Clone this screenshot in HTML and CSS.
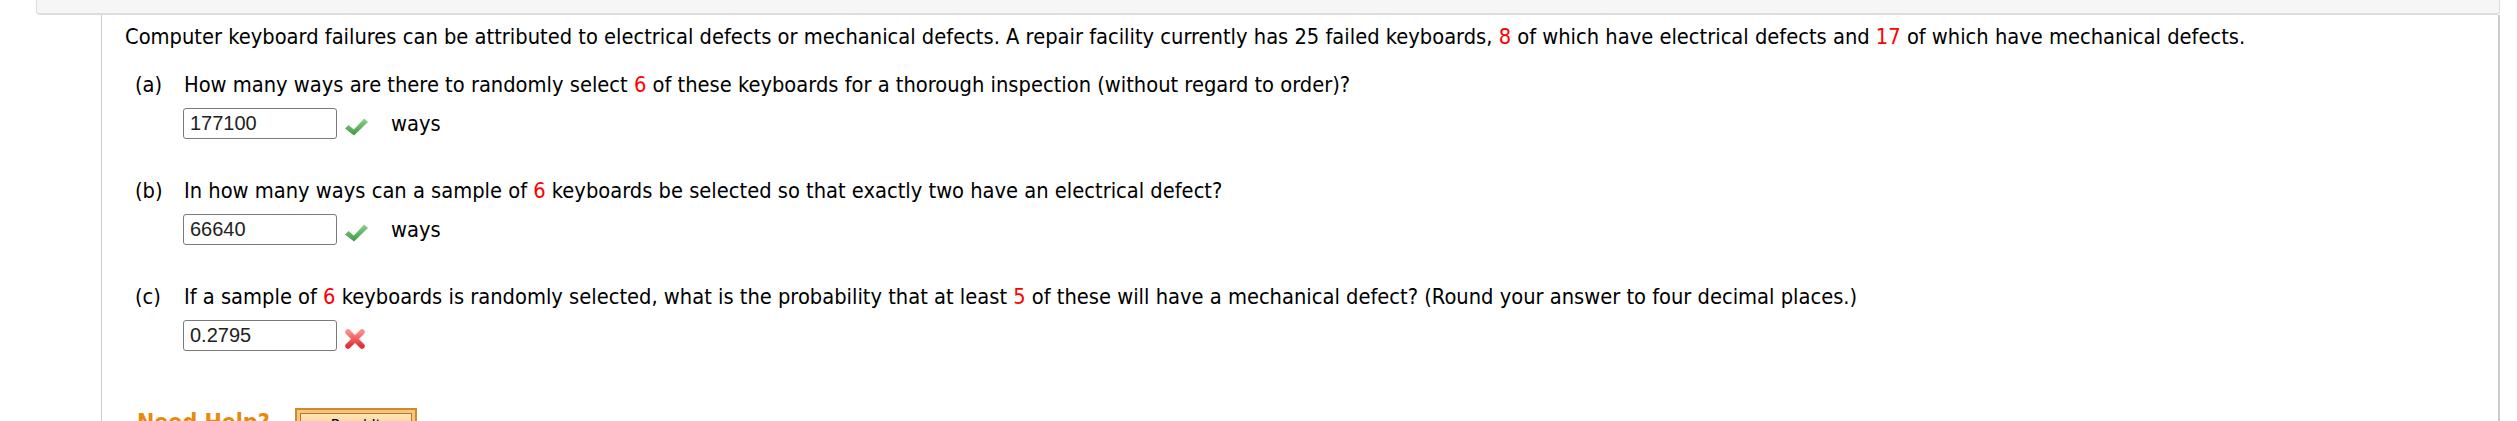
FILE: index.html
```html
<!DOCTYPE html>
<html>
<head>
<meta charset="utf-8">
<link rel="stylesheet" href="styles.css">
</head>
<body>
<div class="topbar"></div>
<div class="content">
  <p class="intro">Computer keyboard failures can be attributed to electrical defects or mechanical defects. A repair facility currently has 25 failed keyboards, <span class="red">8</span> of which have electrical defects and <span class="red">17</span> of which have mechanical defects.</p>

  <div class="part part-first">
    <div class="question"><span class="label">(a)</span><span class="qtext">How many ways are there to randomly select <span class="red">6</span> of these keyboards for a thorough inspection (without regard to order)?</span></div>
    <div class="answer">
      <div class="box">177100</div>
      <svg class="icon check" viewBox="0 0 23 18" width="23" height="18"><defs><linearGradient id="g1" x1="0" y1="0" x2="0" y2="1"><stop offset="0" stop-color="#8fd18f"/><stop offset="1" stop-color="#3e9a3e"/></linearGradient></defs><polygon points="0,10.5 3.6,7 8.8,11.6 19.2,0.5 23,4 9,17.5" fill="url(#g1)"/></svg>
      <span class="unit">ways</span>
    </div>
  </div>

  <div class="part">
    <div class="question"><span class="label">(b)</span><span class="qtext">In how many ways can a sample of <span class="red">6</span> keyboards be selected so that exactly two have an electrical defect?</span></div>
    <div class="answer">
      <div class="box">66640</div>
      <svg class="icon check" viewBox="0 0 23 18" width="23" height="18"><defs><linearGradient id="g2" x1="0" y1="0" x2="0" y2="1"><stop offset="0" stop-color="#8fd18f"/><stop offset="1" stop-color="#3e9a3e"/></linearGradient></defs><polygon points="0,10.5 3.6,7 8.8,11.6 19.2,0.5 23,4 9,17.5" fill="url(#g2)"/></svg>
      <span class="unit">ways</span>
    </div>
  </div>

  <div class="part">
    <div class="question"><span class="label">(c)</span><span class="qtext">If a sample of <span class="red">6</span> keyboards is randomly selected, what is the probability that at least <span class="red">5</span> of these will have a mechanical defect? (Round your answer to four decimal places.)</span></div>
    <div class="answer">
      <div class="box">0.2795</div>
      <svg class="icon cross" viewBox="0 0 20 20" width="20" height="20"><defs><linearGradient id="g3" x1="0" y1="0" x2="0" y2="1"><stop offset="0" stop-color="#ff8a8a"/><stop offset="1" stop-color="#e0303a"/></linearGradient></defs><path d="M3 3 L17 17 M17 3 L3 17" stroke="url(#g3)" stroke-width="5.5" stroke-linecap="round"/></svg>
    </div>
  </div>

  <div class="help">
    <span class="help-text">Need Help?</span>
    <span class="help-btn"><span class="help-btn-inner">Read It</span></span>
  </div>
</div>
</body>
</html>
```

FILE: styles.css
```css
html, body {
  margin: 0;
  padding: 0;
  background: #ffffff;
}
body {
  font-family: "DejaVu Sans Condensed", "DejaVu Sans", Verdana, sans-serif;
  font-size: 21.7px;
  line-height: 24px;
  color: #000000;
  overflow: hidden;
  height: 421px;
}
.topbar {
  margin: -6px 17px 0 36px;
  height: 19px;
  background: #f6f6f6;
  border: 1px solid #dddddd;
  border-top: none;
  border-bottom-width: 2px;
  border-radius: 0 0 4px 4px;
}
.content {
  margin: 0 17px 0 101px;
  border-left: 1px solid #cccccc;
  border-right: 2px solid #cccccc;
  padding: 10px 0 0 23px;
  height: 500px;
}
.intro {
  margin: 0;
}
.red {
  color: #ff0000;
}
.part {
  margin-top: 40px;
}
.part-first {
  margin-top: 24px;
}
.question {
  display: flex;
}
.label {
  width: 59px;
  padding-left: 10px;
  box-sizing: border-box;
  flex: none;
}
.answer {
  display: flex;
  align-items: center;
  margin-top: 11px;
  padding-left: 58px;
  height: 31px;
}
.box {
  box-sizing: border-box;
  width: 154px;
  height: 31px;
  border: 1px solid #7a7a7a;
  border-radius: 3px;
  font-family: "Liberation Sans", Arial, sans-serif;
  font-size: 20px;
  line-height: 29px;
  padding-left: 6px;
  color: #222222;
}
.icon {
  flex: none;
  margin-left: 8px;
  position: relative;
  top: 3px;
}
.unit {
  margin-left: 23px;
}
.help {
  display: flex;
  align-items: flex-start;
  margin-top: 57px;
  padding-left: 12px;
}
.help-text {
  color: #e8890c;
  font-size: 23px;
  font-weight: bold;
  width: 158px;
  flex: none;
  padding-top: 2px;
}
.help-btn {
  width: 122px;
  height: 34px;
  box-sizing: border-box;
  border: 2px solid #cf8a2e;
  background: #f7c47e;
  padding: 3px;
  display: block;
}
.help-btn-inner {
  display: block;
  height: 100%;
  border: 1px solid #b8782a;
  background: linear-gradient(#ffe6bd, #f6b866);
  font-size: 16px;
  text-align: center;
}
```
